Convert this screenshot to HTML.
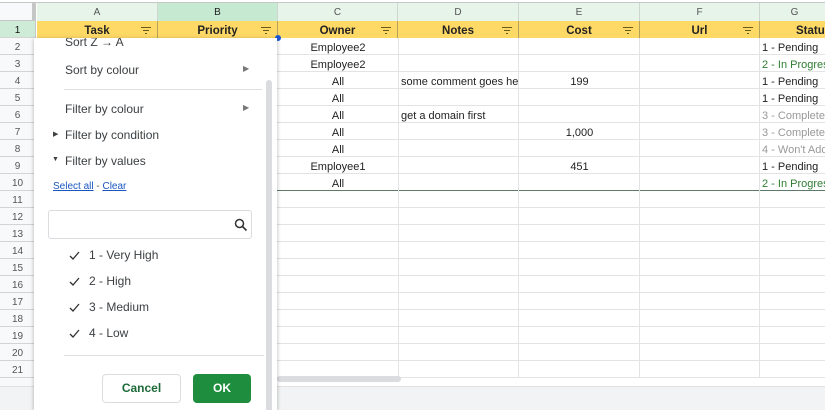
<!DOCTYPE html>
<html><head><meta charset="utf-8"><style>
*{box-sizing:border-box;margin:0;padding:0}
html,body{width:825px;height:410px;overflow:hidden}
body{background:#fff;font-family:"Liberation Sans",Arial,sans-serif;position:relative;font-size:11px;color:#222}
.a{position:absolute}
.hl{position:absolute;height:1px;background:#e2e3e3}
.vl{position:absolute;width:1px;background:#e2e3e3}
.ch{position:absolute;top:3px;height:18px;background:#e6f4ea;color:#555;font-size:10px;text-align:center;line-height:20px;border-right:1px solid #cfd6d1}
.rn{position:absolute;left:0;width:36px;height:17px;font-size:10px;color:#555;text-align:center;line-height:20px;background:#f8f9fa;border-bottom:1px solid #d4d4d4;border-right:1px solid #c4c7c5}
.h1{position:absolute;top:21px;height:17px;background:#ffd966;font-weight:bold;font-size:11.5px;text-align:center;line-height:21px;border-right:1px solid #b5a25a}
.fi{position:absolute;right:6px;top:6px}
.c{position:absolute;height:17px;line-height:20px;font-size:11px;white-space:nowrap;overflow:hidden}
.pm{position:absolute;font-size:12px;color:#3c4043}
</style></head><body>
<div class="a" style="left:0;top:0;width:825px;height:3px;background:#fff;border-bottom:1px solid #c4c7c5"></div>
<div class="a" style="left:0;top:3px;width:36px;height:18px;background:#f8f9fa;border-right:4px solid #c4c7c5;border-bottom:1px solid #c4c7c5"></div>
<div class="ch" style="left:37px;width:121px">A</div>
<div class="ch" style="left:158px;width:120px;background:#c6e9d1;color:#222">B</div>
<div class="ch" style="left:278px;width:120px">C</div>
<div class="ch" style="left:398px;width:121px">D</div>
<div class="ch" style="left:519px;width:121px">E</div>
<div class="ch" style="left:640px;width:120px">F</div>
<div class="ch" style="left:760px;width:70px">G</div>

<div class="rn" style="top:21px;background:#cdebd6;color:#111">1</div>
<div class="rn" style="top:38px">2</div><div class="rn" style="top:55px">3</div><div class="rn" style="top:72px">4</div><div class="rn" style="top:89px">5</div><div class="rn" style="top:106px">6</div><div class="rn" style="top:123px">7</div><div class="rn" style="top:140px">8</div><div class="rn" style="top:157px">9</div><div class="rn" style="top:174px">10</div><div class="rn" style="top:191px">11</div><div class="rn" style="top:208px">12</div><div class="rn" style="top:225px">13</div><div class="rn" style="top:242px">14</div><div class="rn" style="top:259px">15</div><div class="rn" style="top:276px">16</div><div class="rn" style="top:293px">17</div><div class="rn" style="top:310px">18</div><div class="rn" style="top:327px">19</div><div class="rn" style="top:344px">20</div><div class="rn" style="top:361px">21</div>

<div class="hl" style="left:37px;width:800px;top:54px"></div><div class="hl" style="left:37px;width:800px;top:71px"></div><div class="hl" style="left:37px;width:800px;top:88px"></div><div class="hl" style="left:37px;width:800px;top:105px"></div><div class="hl" style="left:37px;width:800px;top:122px"></div><div class="hl" style="left:37px;width:800px;top:139px"></div><div class="hl" style="left:37px;width:800px;top:156px"></div><div class="hl" style="left:37px;width:800px;top:173px"></div>
<div class="a" style="left:37px;width:800px;top:190px;height:1px;background:#5f7a6a"></div>
<div class="hl" style="left:37px;width:800px;top:207px"></div><div class="hl" style="left:37px;width:800px;top:224px"></div><div class="hl" style="left:37px;width:800px;top:241px"></div><div class="hl" style="left:37px;width:800px;top:258px"></div><div class="hl" style="left:37px;width:800px;top:275px"></div><div class="hl" style="left:37px;width:800px;top:292px"></div><div class="hl" style="left:37px;width:800px;top:309px"></div><div class="hl" style="left:37px;width:800px;top:326px"></div><div class="hl" style="left:37px;width:800px;top:343px"></div><div class="hl" style="left:37px;width:800px;top:360px"></div><div class="hl" style="left:37px;width:800px;top:377px"></div>
<div class="vl" style="left:398px;top:38px;height:340px"></div><div class="vl" style="left:518px;top:38px;height:340px"></div><div class="vl" style="left:639px;top:38px;height:340px"></div><div class="vl" style="left:759px;top:38px;height:340px"></div>

<div class="h1" style="left:37px;width:121px">Task<svg class="fi" width="10" height="7"><path d="M0 .5h10M2 3.5h6M4 6.5h2" stroke="#6b5a1e" stroke-width="1"/></svg></div>
<div class="h1" style="left:158px;width:120px">Priority<svg class="fi" width="10" height="7"><path d="M0 .5h10M2 3.5h6M4 6.5h2" stroke="#6b5a1e" stroke-width="1"/></svg></div>
<div class="h1" style="left:278px;width:120px">Owner<svg class="fi" width="10" height="7"><path d="M0 .5h10M2 3.5h6M4 6.5h2" stroke="#6b5a1e" stroke-width="1"/></svg></div>
<div class="h1" style="left:398px;width:121px">Notes<svg class="fi" width="10" height="7"><path d="M0 .5h10M2 3.5h6M4 6.5h2" stroke="#6b5a1e" stroke-width="1"/></svg></div>
<div class="h1" style="left:519px;width:121px">Cost<svg class="fi" width="10" height="7"><path d="M0 .5h10M2 3.5h6M4 6.5h2" stroke="#6b5a1e" stroke-width="1"/></svg></div>
<div class="h1" style="left:640px;width:120px">Url<svg class="fi" width="10" height="7"><path d="M0 .5h10M2 3.5h6M4 6.5h2" stroke="#6b5a1e" stroke-width="1"/></svg></div>
<div class="h1" style="left:760px;width:80px;text-align:left;padding-left:36px">Status</div>
<div class="a" style="left:275px;top:35px;width:6px;height:6px;border-radius:3px;background:#1a56d6"></div>

<div class="c" style="left:278px;width:120px;text-align:center;top:38px">Employee2</div>
<div class="c" style="left:278px;width:120px;text-align:center;top:55px">Employee2</div>
<div class="c" style="left:278px;width:120px;text-align:center;top:72px">All</div>
<div class="c" style="left:278px;width:120px;text-align:center;top:89px">All</div>
<div class="c" style="left:278px;width:120px;text-align:center;top:106px">All</div>
<div class="c" style="left:278px;width:120px;text-align:center;top:123px">All</div>
<div class="c" style="left:278px;width:120px;text-align:center;top:140px">All</div>
<div class="c" style="left:278px;width:120px;text-align:center;top:157px">Employee1</div>
<div class="c" style="left:278px;width:120px;text-align:center;top:174px">All</div>
<div class="c" style="left:401px;width:117px;top:72px">some comment goes here</div>
<div class="c" style="left:401px;width:117px;top:106px">get a domain first</div>
<div class="c" style="left:519px;width:121px;text-align:center;top:72px">199</div>
<div class="c" style="left:519px;width:121px;text-align:center;top:123px">1,000</div>
<div class="c" style="left:519px;width:121px;text-align:center;top:157px">451</div>
<div class="c" style="left:762px;top:38px">1 - Pending</div>
<div class="c" style="left:762px;top:55px;color:#2e7d32">2 - In Progress</div>
<div class="c" style="left:762px;top:72px">1 - Pending</div>
<div class="c" style="left:762px;top:89px">1 - Pending</div>
<div class="c" style="left:762px;top:106px;color:#999">3 - Completed</div>
<div class="c" style="left:762px;top:123px;color:#999">3 - Completed</div>
<div class="c" style="left:762px;top:140px;color:#999">4 - Won't Add</div>
<div class="c" style="left:762px;top:157px">1 - Pending</div>
<div class="c" style="left:762px;top:174px;color:#2e7d32">2 - In Progress</div>

<div class="a" style="left:0;top:378px;width:37px;height:8px;background:#f8f9fa"></div>
<div class="a" style="left:277px;top:376px;width:124px;height:6px;border-radius:3px;background:#dadce0"></div>
<div class="a" style="left:0;top:386px;width:825px;height:24px;background:#f1f3f4;border-top:1px solid #e0e0e0"></div>

<div class="a" style="left:34px;top:38px;width:243px;height:372px;background:#fff;box-shadow:0 1px 4px rgba(0,0,0,.3);overflow:hidden">
  <div class="pm" style="left:31px;top:-3px">Sort Z → A</div>
  <div class="pm" style="left:31px;top:25px">Sort by colour</div>
  <div class="pm" style="left:209px;top:26px;font-size:8px;color:#777">▶</div>
  <div class="a" style="left:30px;top:51px;width:198px;height:1px;background:#e0e0e0"></div>
  <div class="pm" style="left:31px;top:64px">Filter by colour</div>
  <div class="pm" style="left:209px;top:65px;font-size:8px;color:#777">▶</div>
  <div class="pm" style="left:19px;top:92px;font-size:7px">▶</div>
  <div class="pm" style="left:31px;top:90px">Filter by condition</div>
  <div class="pm" style="left:18px;top:118px;font-size:7px">▼</div>
  <div class="pm" style="left:31px;top:116px">Filter by values</div>
  <div class="pm" style="left:19px;top:143px;font-size:10px;color:#1a56c0"><u>Select all</u> <span style="color:#555">-</span> <u>Clear</u></div>
  <div class="a" style="left:14px;top:172px;width:204px;height:29px;border:1px solid #dadce0;border-radius:3px"></div>
  <svg class="a" style="left:200px;top:180px" width="14" height="14"><circle cx="5.5" cy="5.5" r="4" fill="none" stroke="#333" stroke-width="1.5"/><path d="M8.5 8.5l4 4" stroke="#333" stroke-width="1.6"/></svg>
  <svg class="a" style="left:35px;top:213px" width="11" height="9"><path d="M1 5l3 3 6-7" fill="none" stroke="#333" stroke-width="1.3"/></svg><div class="pm" style="left:55px;top:210px">1 - Very High</div>
  <svg class="a" style="left:35px;top:239px" width="11" height="9"><path d="M1 5l3 3 6-7" fill="none" stroke="#333" stroke-width="1.3"/></svg><div class="pm" style="left:55px;top:236px">2 - High</div>
  <svg class="a" style="left:35px;top:265px" width="11" height="9"><path d="M1 5l3 3 6-7" fill="none" stroke="#333" stroke-width="1.3"/></svg><div class="pm" style="left:55px;top:262px">3 - Medium</div>
  <svg class="a" style="left:35px;top:291px" width="11" height="9"><path d="M1 5l3 3 6-7" fill="none" stroke="#333" stroke-width="1.3"/></svg><div class="pm" style="left:55px;top:288px">4 - Low</div>
  <div class="a" style="left:30px;top:317px;width:200px;height:1px;background:#e0e0e0"></div>
  <div class="a" style="left:68px;top:336px;width:79px;height:29px;border:1px solid #dadce0;border-radius:4px;text-align:center;line-height:27px;font-size:12px;color:#1e6b3a;font-weight:bold">Cancel</div>
  <div class="a" style="left:159px;top:336px;width:58px;height:29px;background:#1e8e3e;border-radius:4px;text-align:center;line-height:29px;font-size:12px;color:#fff;font-weight:bold">OK</div>
  <div class="a" style="left:232px;top:42px;width:6px;height:340px;background:#dadce0;border-radius:3px"></div>
</div>
</body></html>
